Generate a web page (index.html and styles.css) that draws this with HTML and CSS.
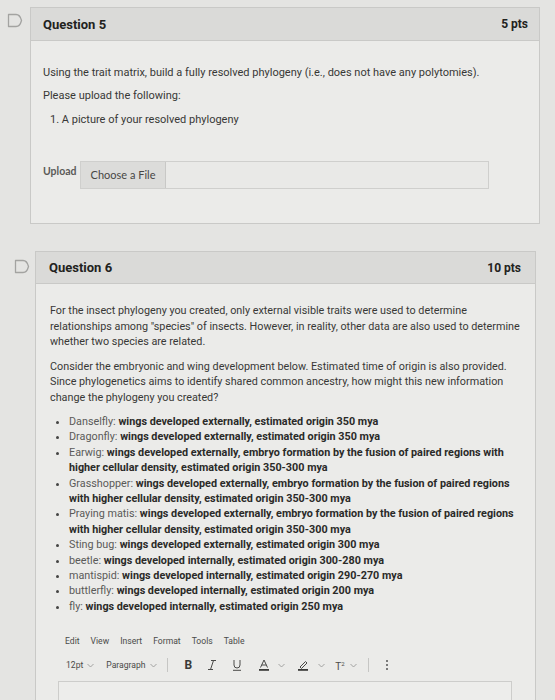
FILE: index.html
```html
<!DOCTYPE html>
<html lang="en">
<head>
<meta charset="utf-8">
<title>Quiz</title>
<link rel="stylesheet" href="styles.css">
</head>
<body>
<div class="page">
  <div class="question q5">
    <svg class="flag" width="16" height="15" viewBox="0 0 16 15"><path d="M1.5 1.5 H9 Q13 1.5 14.5 7.5 Q13 13.5 9 13.5 H1.5 Z" fill="none" stroke="#a3a3a1" stroke-width="1.3" stroke-linejoin="round"/></svg>
    <div class="q-header"><span class="q-title">Question 5</span><span class="q-pts">5 pts</span></div>
    <div class="q-body">
      <p>Using the trait matrix, build a fully resolved phylogeny (i.e., does not have any polytomies).</p>
      <p>Please upload the following:</p>
      <ol class="num-list"><li>A picture of your resolved phylogeny</li></ol>
      <div class="upload">
        <span class="upload-label">Upload</span>
        <div class="file-input"><span class="file-btn">Choose a File</span></div>
      </div>
    </div>
  </div>

  <div class="question q6">
    <svg class="flag" width="16" height="15" viewBox="0 0 16 15"><path d="M1.5 1.5 H9 Q13 1.5 14.5 7.5 Q13 13.5 9 13.5 H1.5 Z" fill="none" stroke="#a3a3a1" stroke-width="1.3" stroke-linejoin="round"/></svg>
    <div class="q-header"><span class="q-title">Question 6</span><span class="q-pts">10 pts</span></div>
    <div class="q-body">
      <p>For the insect phylogeny you created, only external visible traits were used to determine relationships among "species" of insects. However, in reality, other data are also used to determine whether two species are related.</p>
      <p class="p2">Consider the embryonic and wing development below. Estimated time of origin is also provided. Since phylogenetics aims to identify shared common ancestry, how might this new information change the phylogeny you created?</p>
      <ul class="traits">
        <li>Danselfly: <b>wings developed externally, estimated origin 350 mya</b></li>
        <li>Dragonfly: <b>wings developed externally, estimated origin 350 mya</b></li>
        <li>Earwig: <b>wings developed externally, embryo formation by the fusion of paired regions with higher cellular density, estimated origin 350-300 mya</b></li>
        <li>Grasshopper: <b>wings developed externally, embryo formation by the fusion of paired regions with higher cellular density, estimated origin 350-300 mya</b></li>
        <li>Praying matis: <b>wings developed externally, embryo formation by the fusion of paired regions with higher cellular density, estimated origin 350-300 mya</b></li>
        <li>Sting bug: <b>wings developed externally, estimated origin 300 mya</b></li>
        <li>beetle: <b>wings developed internally, estimated origin 300-280 mya</b></li>
        <li>mantispid: <b>wings developed internally, estimated origin 290-270 mya</b></li>
        <li>buttlerfly: <b>wings developed internally, estimated origin 200 mya</b></li>
        <li>fly: <b>wings developed internally, estimated origin 250 mya</b></li>
      </ul>
      <div class="editor">
        <div class="menubar">
          <span>Edit</span><span>View</span><span>Insert</span><span>Format</span><span>Tools</span><span>Table</span>
        </div>
        <div class="toolbar">
          <span class="tb-drop">12pt <svg class="chev" width="7" height="5" viewBox="0 0 7 5"><path d="M0.5 1 L3.5 4 L6.5 1" fill="none" stroke="#9a9a98" stroke-width="0.9"/></svg></span>
          <span class="tb-drop para">Paragraph <svg class="chev" width="7" height="5" viewBox="0 0 7 5"><path d="M0.5 1 L3.5 4 L6.5 1" fill="none" stroke="#9a9a98" stroke-width="0.9"/></svg></span>
          <span class="tb-sep sep1"></span>
          <span class="tb-b">B</span>
          <svg class="tb-icon tb-i" width="10" height="12" viewBox="0 0 10 12"><path d="M4 1.5 H9 M1 10.5 H6 M6.5 1.5 L3.5 10.5" fill="none" stroke="#4a4a48" stroke-width="1"/></svg>
          <svg class="tb-icon tb-u" width="10" height="12" viewBox="0 0 10 12"><path d="M2 1 V6 Q2 9 5 9 Q8 9 8 6 V1 M1 11.3 H9" fill="none" stroke="#4a4a48" stroke-width="1"/></svg>
          <svg class="tb-icon tb-a" width="12" height="12" viewBox="0 0 12 12"><path d="M2.5 8.5 L6 1 L9.5 8.5 M3.7 6 H8.3" fill="none" stroke="#4a4a48" stroke-width="1"/><rect x="1" y="10" width="10" height="1.8" fill="#3c3c3a"/></svg>
          <svg class="chev chev-a" width="7" height="5" viewBox="0 0 7 5"><path d="M0.5 1 L3.5 4 L6.5 1" fill="none" stroke="#9a9a98" stroke-width="0.9"/></svg>
          <svg class="tb-icon tb-pen" width="12" height="12" viewBox="0 0 12 12"><path d="M3 8 L8.5 2.5 L10 4 L4.5 9.5 Z" fill="none" stroke="#4a4a48" stroke-width="1"/><rect x="1" y="10" width="10" height="1.8" fill="#3c3c3a"/></svg>
          <svg class="chev chev-pen" width="7" height="5" viewBox="0 0 7 5"><path d="M0.5 1 L3.5 4 L6.5 1" fill="none" stroke="#9a9a98" stroke-width="0.9"/></svg>
          <span class="tb-sup">T<sup>2</sup></span>
          <svg class="chev chev-sup" width="7" height="5" viewBox="0 0 7 5"><path d="M0.5 1 L3.5 4 L6.5 1" fill="none" stroke="#9a9a98" stroke-width="0.9"/></svg>
          <span class="tb-sep sep2"></span>
          <svg class="tb-icon tb-more" width="4" height="12" viewBox="0 0 4 12"><circle cx="2" cy="2" r="1" fill="#555"/><circle cx="2" cy="6" r="1" fill="#555"/><circle cx="2" cy="10" r="1" fill="#555"/></svg>
        </div>
        <div class="edit-area"></div>
      </div>
    </div>
  </div>
</div>
</body>
</html>
```
FILE: styles.css
```css
* { box-sizing: border-box; }

html, body {
  margin: 0;
  padding: 0;
  background: #e4e4e2;
  font-family: Roboto, "Liberation Sans", Arial, sans-serif;
  color: #383836;
  overflow: hidden;
}

.page {
  padding-top: 7px;
  height: 700px;
  overflow: hidden;
}

.question {
  position: relative;
  background: #ebebe9;
  border: 1px solid #c9c9c7;
}

.q5 {
  margin-left: 30px;
  width: 510px;
}

.q6 {
  margin-left: 35px;
  width: 501px;
  margin-top: 27px;
}

.flag {
  position: absolute;
}

.q5 .flag { left: -24px; top: 5px; }
.q6 .flag { left: -22px; top: 7px; }

.q-header {
  height: 33px;
  background: #dadad8;
  border-bottom: 1px solid #c9c9c7;
  display: flex;
  align-items: center;
  justify-content: space-between;
  padding: 0 11px 0 12px;
  font-weight: 700;
  font-size: 13px;
  color: #222220;
}

.q6 .q-header { padding: 0 14px 0 13px; height: 32px; }

.q-pts { font-size: 12px; }

.q-body p {
  margin: 0;
}

.q5 .q-body {
  padding: 24px 12px 34px 12px;
  font-size: 11px;
  line-height: 16px;
}

.q5 .q-body p + p { margin-top: 7px; }

.num-list {
  margin: 8px 0 0 0;
  padding-left: 7px;
  list-style-position: inside;
}

.upload {
  margin-top: 33px;
  display: flex;
  align-items: flex-start;
}

.upload-label {
  font-family: Lato, "Liberation Sans", sans-serif;
  font-size: 10.5px;
  font-weight: 700;
  color: #5a5a58;
  width: 37px;
  padding-top: 2px;
}

.file-input {
  width: 409px;
  height: 28px;
  border: 1px solid #cfcfcd;
  background: #e9e9e7;
  display: flex;
}

.file-btn {
  width: 85px;
  height: 100%;
  background: #dcdcda;
  border-right: 1px solid #c8c8c6;
  display: flex;
  align-items: center;
  justify-content: center;
  font-family: Lato, "Liberation Sans", sans-serif;
  font-size: 11px;
  color: #474745;
}

.q6 .q-body {
  padding: 19px 14px 0 14px;
  font-size: 10.8px;
  line-height: 15.5px;
  height: 420px;
}

.q6 .p2 { margin-top: 9px; }

.traits {
  margin: 9px 0 0 0;
  padding-left: 19px;
  color: #5a5a58;
  font-size: 10.8px;
  line-height: 15.4px;
}

.traits b {
  font-weight: 700;
  color: #2a2a28;
}

.traits li::marker { color: #444; }

.editor {
  margin-top: 21px;
  margin-left: 8px;
  width: 454px;
}

.menubar {
  display: flex;
  gap: 11px;
  padding-left: 7px;
  font-size: 8.6px;
  color: #4a4a48;
  line-height: 12px;
}

.toolbar {
  display: flex;
  align-items: center;
  margin-top: 11px;
  padding-left: 8px;
  height: 14px;
  font-size: 8.6px;
  color: #4a4a48;
}

.tb-drop {
  display: inline-flex;
  align-items: center;
  gap: 4px;
}

.tb-drop.para { margin-left: 12px; }

.tb-sep {
  width: 1px;
  height: 14px;
  background: #c6c6c4;
}

.sep1 { margin: 0 16px 0 10px; }
.sep2 { margin: 0 16px 0 11px; }

.tb-b {
  font-weight: 700;
  font-size: 12px;
  color: #3a3a38;
  margin-left: 1px;
}

.tb-icon, .chev { display: block; flex: none; }

.tb-i { margin-left: 15px; }
.tb-u { margin-left: 15px; }
.tb-a { margin-left: 16px; }
.chev-a { margin-left: 8px; }
.tb-pen { margin-left: 12px; }
.chev-pen { margin-left: 9px; }

.tb-sup {
  font-size: 10px;
  color: #4a4a48;
  margin-left: 10px;
}

.tb-sup sup { font-size: 6px; }

.chev-sup { margin-left: 5px; }

.edit-area {
  margin-top: 9px;
  height: 60px;
  border: 1px solid #cdcdcb;
  background: #ededeb;
}
```
